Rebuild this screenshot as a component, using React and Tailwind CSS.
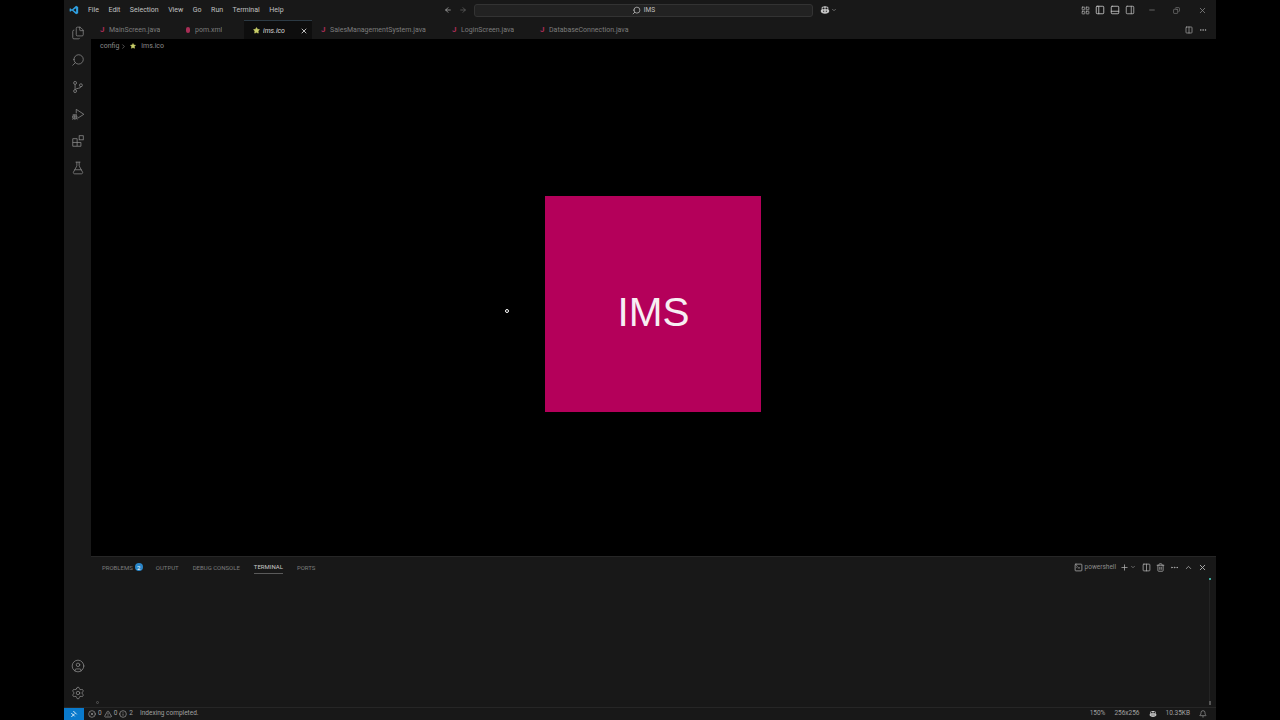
import React from "react";
import {
  ArrowLeft,
  ArrowRight,
  Bell,
  ChevronDown,
  ChevronRight,
  ChevronUp,
  CircleAlert,
  CircleUser,
  CircleX,
  Columns2,
  Copy,
  Ellipsis,
  Files,
  FlaskConical,
  LayoutGrid,
  Minus,
  PanelBottom,
  PanelLeft,
  PanelRight,
  Plus,
  Search,
  Settings,
  SquareTerminal,
  Star,
  Trash2,
  TriangleAlert,
  X,
} from "lucide-react";

const menus = ["File", "Edit", "Selection", "View", "Go", "Run", "Terminal", "Help"];

const tabs = [
  { name: "MainScreen.java", w: "w-[85px]" },
  { name: "pom.xml", w: "w-[68px]", xml: true },
  { name: "ims.ico", w: "w-[68px]", active: true },
  { name: "SalesManagementSystem.java", w: "w-[131px]" },
  { name: "LoginScreen.java", w: "w-[88px]" },
  { name: "DatabaseConnection.java", w: "w-[109px]" },
];

function VsLogo() {
  return (
    <svg viewBox="0 0 24 24" className="w-[10px] h-[10px]">
      <path d="M17 2 L22 4.500 V19.500 L17 22 L7 13 L3 16 L1.500 15 V9 L3 8 L7 11 Z M17 7.500 L10.500 12 L17 16.500 Z" fill="#2f9fe0" />
    </svg>
  );
}

function CopilotIcon({ className }) {
  return (
    <svg viewBox="0 0 24 24" className={className} fill="#c4c4c4">
      <path d="M12 3c-2 0-3.400.3-4.300 1.300C6.700 4 5 4.200 4.300 5.300 3.500 6.500 3.700 8.500 4.500 10 3.500 10.700 2 11.500 2 13v3c0 1 4 5 10 5s10-4 10-5v-3c0-1.500-1.500-2.300-2.500-3 .8-1.500 1-3.500.2-4.700C19 4.200 17.300 4 16.300 4.300 15.400 3.300 14 3 12 3z" />
      <rect x="8" y="13" width="2" height="4" rx="1" fill="#1a1a1a" />
      <rect x="14" y="13" width="2" height="4" rx="1" fill="#1a1a1a" />
      <rect x="6" y="6" width="5" height="4" rx="1.500" fill="#1a1a1a" />
      <rect x="13" y="6" width="5" height="4" rx="1.500" fill="#1a1a1a" />
    </svg>
  );
}

function SourceControlIcon({ className }) {
  return (
    <svg viewBox="0 0 24 24" className={className} fill="none" stroke="currentColor" strokeWidth="1.300">
      <circle cx="7" cy="5" r="2.500" />
      <circle cx="7" cy="19" r="2.500" />
      <circle cx="17" cy="9" r="2.500" />
      <path d="M7 7.500 V16.500 M17 11.500 C17 15 9 13.500 7.500 16.500" />
    </svg>
  );
}

function RunDebugIcon({ className }) {
  return (
    <svg viewBox="0 0 24 24" className={className} fill="none" stroke="currentColor" strokeWidth="1.300">
      <path d="M9 4 L22 12.500 L11 19.500 M9 4 V11" />
      <circle cx="6.500" cy="17" r="3.800" />
      <path d="M2.700 17 H10.300 M6.500 13.200 V20.800 M3.500 12.500 L5 14 M9.500 12.500 L8 14 M2 21.500 L3.800 19.800 M11 21.500 L9.200 19.800" />
    </svg>
  );
}

function ExtensionsIcon({ className }) {
  return (
    <svg viewBox="0 0 24 24" className={className} fill="none" stroke="currentColor" strokeWidth="1.300">
      <path d="M3 8 H10.500 V21 H3 Z M3 14.500 H17 V21 H10.500" />
      <rect x="14" y="3" width="7" height="7" />
    </svg>
  );
}

function JavaIcon() {
  return <span className="text-[8px] leading-none font-bold text-[#a82d55] w-[9px] shrink-0">J</span>;
}

function EditorTab({ tab }) {
  return (
    <div className={`${tab.w} pl-[9px] pt-[1px] h-full flex items-center shrink-0 ${tab.active ? "bg-[#0e0e0e] border-t border-[#2c3a44]" : ""}`}>
      {tab.active ? (
        <Star className="w-[7px] h-[7px] text-[#c9cf6a] mr-[3px] shrink-0" fill="#c9cf6a" />
      ) : tab.xml ? (
        <span className="w-[4px] h-[6px] rounded-full bg-[#a82d55] mr-[5px] ml-[1px] shrink-0" />
      ) : (
        <JavaIcon />
      )}
      <span className={`text-[7px] truncate pt-[1px] ${tab.active ? "italic text-[#d8d8d8]" : "text-[#7c7c7c]"}`}>{tab.name}</span>
      {tab.active && <X className="w-[8px] h-[8px] text-[#e0e0e0] ml-auto mr-[4px]" strokeWidth={2.5} />}
    </div>
  );
}

function ActivityIcon({ icon: Icon, flip }) {
  return (
    <div className="h-[27px] flex items-center justify-center">
      <Icon className={`w-[14px] h-[14px] text-[#8f8f8f] ${flip ? "-scale-x-100" : ""}`} strokeWidth={1.25} />
    </div>
  );
}

export default function App() {
  return (
    <div className="w-[1280px] h-[720px] bg-black px-16 overflow-hidden relative font-['Roboto','Noto_Sans',sans-serif]">
      <div className="h-full flex flex-col bg-[#181818]">
        {/* title bar */}
        <div className="h-5 shrink-0 flex items-center">
          <div className="w-[19px] pl-[5px] flex items-center">
            <VsLogo />
          </div>
          <div className="flex items-center text-[7px] text-[#c0c0c0] ml-[5px] gap-[9.500px] w-[360px]">
            {menus.map((m) => (
              <span key={m}>{m}</span>
            ))}
          </div>
          <ArrowLeft className="w-[8px] h-[8px] text-[#c0c0c0] ml-[-4px]" />
          <ArrowRight className="w-[8px] h-[8px] text-[#6a6a6a] ml-[7px]" />
          <div className="w-[339px] h-[13px] ml-[7px] rounded-[3px] bg-[#222222] border border-[#333333] flex items-center justify-center gap-[3px]">
            <Search className="w-[9px] h-[9px] text-[#c0c0c0] -scale-x-100" />
            <span className="text-[6.5px] text-[#c0c0c0] pt-[1px]">IMS</span>
          </div>
          <CopilotIcon className="w-[10px] h-[10px] ml-[7px]" />
          <ChevronDown className="w-[6px] h-[6px] text-[#b0b0b0] ml-[1px]" />
          <div className="ml-auto flex items-center">
            <LayoutGrid className="w-[9px] h-[9px] text-[#b0b0b0] mr-[5px]" />
            <PanelLeft className="w-[10px] h-[10px] text-[#c8c8c8] mr-[5px]" />
            <PanelBottom className="w-[10px] h-[10px] text-[#c8c8c8] mr-[5px]" />
            <PanelRight className="w-[10px] h-[10px] text-[#b0b0b0] mr-[13px]" />
            <Minus className="w-[8px] h-[8px] text-[#8a8a8a] mr-[17px]" />
            <Copy className="w-[7px] h-[7px] text-[#8a8a8a] mr-[18px] -scale-x-100" />
            <X className="w-[9px] h-[9px] text-[#8a8a8a] mr-[9px]" />
          </div>
        </div>

        <div className="flex-1 flex min-h-0">
          {/* activity bar */}
          <div className="w-[27px] shrink-0 flex flex-col -mt-[1px]">
            <ActivityIcon icon={Files} />
            <ActivityIcon icon={Search} flip />
            <ActivityIcon icon={SourceControlIcon} />
            <ActivityIcon icon={RunDebugIcon} />
            <ActivityIcon icon={ExtensionsIcon} />
            <ActivityIcon icon={FlaskConical} />
            <div className="mt-auto pb-[0.500px]">
              <ActivityIcon icon={CircleUser} />
              <ActivityIcon icon={Settings} />
            </div>
          </div>

          <div className="flex-1 min-w-0 flex flex-col">
            {/* tabs */}
            <div className="h-[19px] shrink-0 flex items-center">
              {tabs.map((t) => (
                <EditorTab key={t.name} tab={t} />
              ))}
              <div className="ml-auto flex items-center gap-[6px] pr-[9px]">
                <Columns2 className="w-[8px] h-[8px] text-[#b0b0b0]" />
                <Ellipsis className="w-[8px] h-[8px] text-[#b0b0b0]" />
              </div>
            </div>

            {/* editor */}
            <div className="h-[517px] shrink-0 bg-black flex flex-col">
              <div className="h-[14px] shrink-0 flex items-center pl-[9px] text-[7px] text-[#8a8a8a]">
                <span>config</span>
                <ChevronRight className="w-[7px] h-[7px] mx-[1px]" />
                <Star className="w-[6px] h-[6px] text-[#c9cf6a] mx-[2px]" fill="#c9cf6a" />
                <span className="ml-[3px]">ims.ico</span>
              </div>
              <div className="flex-1 flex items-center justify-center pr-[2px] pb-[2px]">
                <div className="w-[216px] h-[216px] bg-[#b4005a] flex items-center justify-center pt-[18px] pl-[2px]">
                  <span className="text-[40.5px] leading-none text-[#f7eef3] font-['Liberation_Sans',sans-serif]">IMS</span>
                </div>
              </div>
            </div>

            {/* panel */}
            <div className="flex-1 min-h-0 border-t border-[#262626] flex flex-col">
              <div className="h-[20px] shrink-0 flex items-center text-[6px] text-[#7c7c7c] pl-[11px] pr-[9px]">
                <span>PROBLEMS</span>
                <span className="ml-[2px] w-[8px] h-[8px] rounded-full bg-[#2a86c8] text-white text-[6px] flex items-center justify-center">2</span>
                <span className="ml-[13px]">OUTPUT</span>
                <span className="ml-[14px]">DEBUG CONSOLE</span>
                <span className="ml-[14px] text-[#c8c8c8] border-b border-[#5a5a5a] h-[13px] flex items-center">TERMINAL</span>
                <span className="ml-[14px]">PORTS</span>
                <div className="ml-auto flex items-center text-[#b0b0b0]">
                  <SquareTerminal className="w-[9px] h-[9px] mr-[2px]" />
                  <span className="text-[#8c8c8c] text-[6.5px] pt-[2px]">powershell</span>
                  <Plus className="w-[9px] h-[9px] ml-[4px]" />
                  <ChevronDown className="w-[6px] h-[6px] ml-[1px] mr-[6px]" />
                  <Columns2 className="w-[9px] h-[9px] mr-[5px]" />
                  <Trash2 className="w-[9px] h-[9px] mr-[5px]" />
                  <Ellipsis className="w-[9px] h-[9px] mr-[5px]" />
                  <ChevronUp className="w-[9px] h-[9px] mr-[5px]" />
                  <X className="w-[9px] h-[9px]" strokeWidth={2.5} />
                </div>
              </div>
              {/* terminal body */}
              <div className="flex-1 min-h-0 flex justify-between pl-[5px] pr-[5px] pb-[2px]">
                <div className="self-end w-[3px] h-[3px] mb-[1px] rounded-full border border-[#555555]" />
                <div className="w-[2px] flex flex-col pt-[1px]">
                  <div className="h-[2px] bg-[#3fa89a] shrink-0" />
                  <div className="flex-1 w-[1px] bg-[#242424]" />
                  <div className="h-[4px] bg-[#555555] shrink-0" />
                </div>
              </div>
            </div>
          </div>
        </div>

        {/* status bar */}
        <div className="h-[13px] shrink-0 flex items-center text-[6.5px] text-[#a0a0a0] border-t border-[#262626]">
          <div className="w-[20px] h-full bg-[#0a7acc] flex items-center justify-center text-white">
            <svg viewBox="0 0 24 24" className="w-[8px] h-[8px]" fill="none" stroke="currentColor" strokeWidth="2.500">
              <path d="M4 21 L14 11 M10 3 L20 13 M4 9 L14 19" />
            </svg>
          </div>
          <CircleX className="w-[8px] h-[8px] ml-[4px]" />
          <span className="ml-[2px]">0</span>
          <TriangleAlert className="w-[8px] h-[8px] ml-[2px]" />
          <span className="ml-[2px]">0</span>
          <CircleAlert className="w-[8px] h-[8px] ml-[2px] rotate-180" />
          <span className="ml-[2px]">2</span>
          <span className="ml-[7px]">Indexing completed.</span>
          <div className="ml-auto flex items-center pr-[9px]">
            <span>150%</span>
            <span className="ml-[9px]">256x256</span>
            <CopilotIcon className="w-[8px] h-[8px] ml-[9px]" />
            <span className="ml-[9px]">10.35KB</span>
            <Bell className="w-[8px] h-[8px] ml-[9px]" />
          </div>
        </div>
      </div>

      {/* mouse cursor over the video */}
      <div className="absolute left-[505px] top-[309px] w-[4px] h-[4px] rounded-full border border-white bg-black" />
    </div>
  );
}
